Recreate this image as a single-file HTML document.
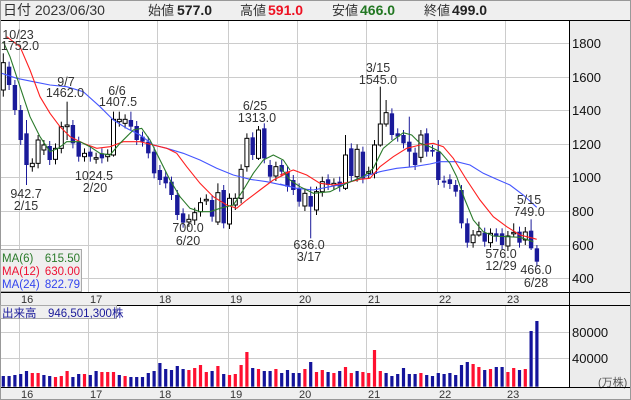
<!DOCTYPE html>
<html><head><meta charset="utf-8">
<style>
html,body{margin:0;padding:0;background:#fff;}
body{width:631px;height:400px;overflow:hidden;position:relative;font-family:"Liberation Sans","Noto Sans CJK JP",sans-serif;}
svg{position:absolute;left:0;top:0;}
</style></head>
<body>
<svg id="s" width="631" height="400" xmlns="http://www.w3.org/2000/svg" font-family="Liberation Sans, Noto Sans CJK JP, sans-serif"></svg>
<script>
var o=[];
function R(x,y,w,h,f,s){o.push('<rect x="'+x+'" y="'+y+'" width="'+w+'" height="'+h+'" fill="'+f+'"'+(s?' stroke="'+s+'" stroke-width="1"':'')+'/>');}
function L(x1,y1,x2,y2,c,w){o.push('<line x1="'+x1+'" y1="'+y1+'" x2="'+x2+'" y2="'+y2+'" stroke="'+c+'" stroke-width="'+(w||1)+'"/>');}
function T(x,y,t,c,sz,anc,fw){o.push('<text x="'+x+'" y="'+y+'" fill="'+(c||'#333')+'" font-size="'+(sz||12)+'"'+(anc?' text-anchor="'+anc+'"':'')+(fw?' font-weight="'+fw+'"':'')+'>'+t+'</text>');}
// backgrounds
R(0,0,631,400,'#fff');
R(0,0,631,20,'#efefef');
R(569,20,62,272,'#ececec');
R(0,292,631,13,'#efefef');
R(569,305,62,82,'#ececec');
R(0,387,631,13,'#efefef');
// grids
var vx=[19,88,157,228,297,366,437,505];
vx.forEach(function(x){L(x+.5,20,x+.5,292,'#ccc');L(x+.5,305,x+.5,387,'#ccc');});
var py=[43,77,110,144,177,211,245,278],pl=['1800','1600','1400','1200','1000','800','600','400'];
py.forEach(function(y,i){L(0,y+.5,569,y+.5,'#ccc');T(572,y+5,pl[i],'#111',13);});
[332,358].forEach(function(y){L(0,y+.5,569,y+.5,'#ccc');});
T(572,337,'80000','#111',13);T(572,363,'40000','#111',13);
T(598,386,'(万株)','#555',11);
// candles (zoom coords)
var C=[[128,210,'w',100,230],[140,195,'b'],[195,270,'b'],[270,360,'b'],[340,435,'b',300,495],[430,440,'w'],[360,430,'w'],[375,390,'w'],[378,420,'b'],[385,418,'w'],[320,385,'w'],[315,320,'w',245,360],[315,370,'b'],[365,410,'b'],[400,410,'w'],[395,410,'b'],[413,416,'w'],[400,415,'b'],[403,410,'w'],[298,405,'w',275,410],[298,305,'w',275,320],[298,310,'w'],[300,320,'b',275,330],[318,360,'b'],[350,365,'b'],[365,400,'b'],[395,460,'b'],[450,480,'b'],[470,490,'b'],[485,525,'b'],[525,585,'b'],[580,608,'b'],[598,606,'w'],[578,600,'w'],[548,575,'w'],[538,540,'w'],[540,590,'b'],[518,606,'w',490,615],[510,610,'b'],[535,612,'w'],[535,555,'w'],[448,535,'w'],[355,440,'w'],[352,405,'b'],[330,415,'w',318,420],[325,415,'b'],[435,470,'b'],[440,468,'w'],[435,455,'b'],[455,500,'b'],[480,510,'b'],[505,545,'b'],[520,558,'w'],[528,560,'b',500,655],[515,570,'w'],[485,515,'w'],[478,495,'b'],[490,495,'w'],[485,500,'b'],[405,505,'w',345,510],[385,468,'b'],[388,470,'w'],[395,475,'b'],[455,460,'w'],[375,460,'w'],[312,375,'w',200,380],[278,312,'w',240,320],[280,345,'b'],[340,350,'b'],[345,370,'b'],[365,395,'b',290,440],[398,435,'b'],[345,412,'w'],[340,395,'b'],[390,395,'b'],[395,480,'b',360,495],[482,488,'b'],[478,492,'b'],[495,515,'b'],[510,610,'b'],[610,668,'b'],[645,668,'w'],[635,645,'w',605,650],[638,665,'b'],[640,668,'w'],[640,650,'b'],[640,675,'b'],[648,678,'w'],[637,640,'w',610,650],[635,668,'b'],[636,660,'w'],[632,685,'b',598,690],[685,725,'b',675,740]];
function zy(y){return y/3+20;}
C.forEach(function(c,i){var cx=3.3+i*5.8;var t=zy(c[0]),b=zy(c[1]);var hi=zy(c[3]!==undefined?c[3]:c[0]-15),lo=zy(c[4]!==undefined?c[4]:c[1]+15);
L(cx,hi,cx,lo,c[2]=='w'?'#000':'#1a1a9a');
if(b-t<1.5)b=t+1.5;
if(c[2]=='w')R(cx-2,t,4,b-t,'#fff','#000');else R(cx-2.2,t,4.4,b-t,'#1a1a9a');});
// MA lines
function P(pts,off,col){var s=pts.map(function(p){return (off+p[0]/3).toFixed(1)+','+zy(p[1]).toFixed(1);}).join(' ');o.push('<polyline points="'+s+'" fill="none" stroke="'+col+'" stroke-width="1.1"/>');}
P([[5,160],[50,175],[100,185],[150,195],[200,200],[250,215],[300,260],[340,300],[380,325],[420,345],[460,375],[500,385],[550,400],[600,420],[650,445],[700,465],[750,478],[800,485],[870,500]],0,'#4455ff');
P([[0,492],[50,505],[100,510],[150,500],[200,490],[250,470],[300,455],[350,445],[400,440],[450,432],[480,425],[530,425],[570,435],[610,460],[650,478],[690,495],[730,525],[770,562]],280,'#4455ff');
P([[20,50],[60,80],[90,150],[120,230],[150,280],[180,320],[210,350],[250,370],[290,385],[330,380],[370,365],[420,365],[460,375],[500,385],[530,400],[560,440],[600,490],[640,530],[680,555],[710,565],[740,540],[780,510],[820,480],[870,455]],0,'#ff2020');
P([[0,465],[40,450],[80,465],[120,490],[160,495],[200,488],[240,478],[270,475],[300,440],[340,410],[380,385],[420,375],[460,370],[490,380],[520,415],[560,480],[600,540],[640,590],[680,620],[720,645],[760,655],[770,658]],280,'#ff2020');
P([[10,65],[30,110],[60,200],[90,290],[120,350],[150,395],[175,385],[200,365],[240,365],[270,380],[300,400],[330,405],[360,370],[400,330],[425,325],[450,360],[480,420],[510,480],[540,530],[570,565],[600,575],[630,575],[660,565],[700,555],[730,510],[760,460],[790,420],[820,405],[850,420],[870,450]],0,'#2a7a2a');
P([[0,440],[30,480],[60,500],[100,520],[150,515],[200,490],[250,470],[280,445],[310,385],[340,360],[370,338],[395,345],[420,370],[450,380],[480,395],[510,430],[530,470],[555,540],[580,600],[610,635],[640,648],[680,650],[720,652],[760,665]],280,'#2a7a2a');
// volume
var V=[[168,'B'],[168,'B'],[165,'B'],[162,'B'],[153,'B'],[159,'R'],[159,'R'],[165,'B'],[168,'B'],[171,'R'],[168,'R'],[153,'R'],[171,'B'],[162,'B'],[162,'R'],[165,'B'],[153,'B'],[156,'R'],[156,'R'],[156,'R'],[165,'B'],[168,'R'],[171,'B'],[171,'B'],[171,'B'],[159,'B'],[153,'B'],[129,'B'],[147,'B'],[150,'B'],[138,'B'],[147,'B'],[150,'R'],[144,'R'],[135,'R'],[156,'R'],[153,'B'],[138,'R'],[162,'B'],[165,'R'],[162,'R'],[135,'R'],[96,'R'],[144,'B'],[147,'R'],[153,'B'],[153,'B'],[147,'R'],[159,'B'],[150,'B'],[159,'B'],[159,'B'],[147,'R'],[126,'B'],[156,'R'],[150,'R'],[156,'B'],[159,'R'],[153,'B'],[141,'R'],[159,'R'],[153,'B'],[156,'R'],[159,'R'],[90,'R'],[153,'R'],[159,'B'],[168,'B'],[162,'B'],[144,'B'],[162,'B'],[162,'B'],[159,'R'],[165,'B'],[168,'B'],[159,'B'],[162,'B'],[159,'B'],[165,'B'],[135,'B'],[126,'B'],[132,'R'],[141,'R'],[150,'B'],[147,'R'],[141,'B'],[141,'B'],[156,'R'],[144,'R'],[150,'B'],[147,'R'],[33,'B'],[3,'B']];
V.forEach(function(v,i){var cx=3.3+i*5.8;var t=320+v[0]/3;R(cx-1.6,t,3.2,386.7-t,v[1]=='R'?'#ff1030':'#14149b');});
// frame lines
L(0,20.5,631,20.5,'#000');L(569.5,20,569.5,387,'#000');L(0,292.5,631,292.5,'#000');L(0,305.5,631,305.5,'#000');L(0,387.5,631,387.5,'#000');
L(0.5,20,0.5,387,'#000');
o.push('<rect x="0.5" y="0.5" width="630" height="399" fill="none" stroke="#999"/>');
// dates
['16','17','18','19','20','21','22','23'].forEach(function(t,i){T(vx[i]+2,303,t,'#333',11);T(vx[i]+2,398,t,'#333',11);});
// header
T(3,15,'日付 2023/06/30','#333',14);
T(148,15,'始値','#333',13);T(177,15,'577.0','#222',14,null,'bold');
T(240,15,'高値','#333',13);T(268,15,'591.0','#ee1122',14,null,'bold');
T(332,15,'安値','#333',13);T(360,15,'466.0','#227722',14,null,'bold');
T(424,15,'終値','#333',13);T(452,15,'499.0','#222',14,null,'bold');
// annotations
var A=[[18,39,'10/23'],[20,50,'1752.0'],[66,86,'9/7'],[65,97,'1462.0'],[117,95,'6/6'],[118,106,'1407.5'],[26,198,'942.7'],[26,210,'2/15'],[94,180,'1024.5'],[95,192,'2/20'],[188,232,'700.0'],[188,245,'6/20'],[255,110,'6/25'],[257,122,'1313.0'],[309,249,'636.0'],[309,261,'3/17'],[378,72,'3/15'],[378,84,'1545.0'],[529,204,'5/15'],[529,216,'749.0'],[501,258,'576.0'],[501,270,'12/29'],[536,274,'466.0'],[536,287,'6/28']];
A.forEach(function(a){T(a[0],a[1],a[2],'#333',12.5,'middle');});
// legends
o.push('<rect x="0.5" y="249.5" width="81" height="42" fill="#efefef" stroke="#aaa"/>');
T(2,262,'MA(6)','#2a7a2a',11.5);T(80,262,'615.50','#2a7a2a',11.5,'end');
T(2,275,'MA(12)','#ee1133',11.5);T(80,275,'630.00','#ee1133',11.5,'end');
T(2,288,'MA(24)','#3344ee',11.5);T(80,288,'822.79','#3344ee',11.5,'end');
o.push('<rect x="0.5" y="305.5" width="116" height="13" fill="#efefef" stroke="#aaa"/>');
T(2,317,'出来高　946,501,300株','#1a1a9a',11.5);
document.getElementById('s').innerHTML=o.join('');
</script>
</body></html>
